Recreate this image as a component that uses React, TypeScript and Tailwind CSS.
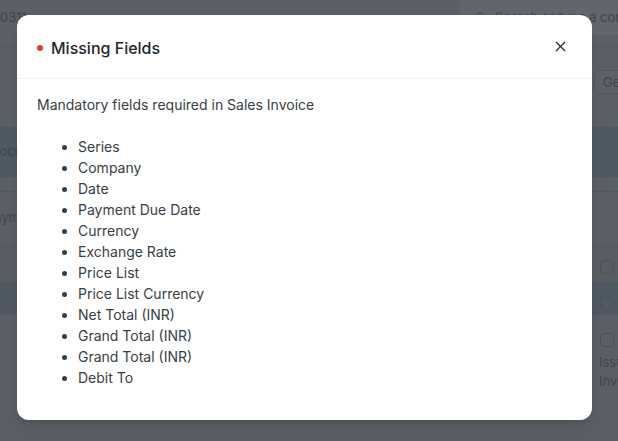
import { X, Search } from 'lucide-react';

const fields = [
  'Series',
  'Company',
  'Date',
  'Payment Due Date',
  'Currency',
  'Exchange Rate',
  'Price List',
  'Price List Currency',
  'Net Total (INR)',
  'Grand Total (INR)',
  'Grand Total (INR)',
  'Debit To',
];

function Backdrop() {
  return (
    <div className="flex h-[441px] flex-col bg-[#5a5f65] text-[13px] text-[#3f454c]">
      <div className="flex h-[47px] items-start justify-between border-b border-[#555a60] bg-[#5b6066]">
        <span className="-ml-[8px] pt-[8px]">20311</span>
        <div className="flex h-[35px] w-[158px] items-center gap-[8px] rounded-bl-md bg-[#61666c] pl-[14px]">
          <Search size={13} strokeWidth={1.6} className="shrink-0" />
          <span className="whitespace-nowrap">Search or type a com</span>
        </div>
      </div>
      <div className="flex h-[80px] flex-col items-end pt-[23px]">
        <div className="-mr-6 h-[24px] w-[48px] rounded-md border border-[#52575d] bg-[#5d6268] pl-2 leading-[22px]">Get</div>
      </div>
      <div className="flex h-[50px] items-center bg-[#4f5963] text-[#3a4550]">
        <span className="-ml-[10px]">Docu</span>
      </div>
      <div className="h-[15px] border-b border-[#53585e]" />
      <div className="flex h-[53px] items-center border-b border-[#53585e]">
        <span className="-ml-[14px]">Payment</span>
      </div>
      <div className="relative h-[38px] border-b border-[#53585e] bg-[#585d63]">
        <div className="absolute right-[4px] top-[15px] h-[14px] w-[14px] rounded-[4px] border border-[#4c5157]" />
      </div>
      <div className="relative h-[32px] bg-[#4f5963]">
        <div className="absolute right-[4px] top-[13px] h-[14px] w-[14px] rounded-[4px] border border-[#4c5157]" />
      </div>
      <div className="flex flex-1 flex-col items-end pt-[18px]">
        <div className="h-[14px] w-[14px] translate-x-[-4px] rounded-[4px] border border-[#4c5157]" />
        <div className="mt-[6px] w-[19px] overflow-hidden leading-[19px]">Issue</div>
        <div className="w-[19px] overflow-hidden leading-[19px]">Invoice</div>
      </div>
    </div>
  );
}

export default function App() {
  return (
    <div className="relative h-[441px] w-[618px] overflow-hidden font-['Inter',sans-serif]">
      <Backdrop />
      <div className="absolute left-[17px] top-[15px] flex h-[405px] w-[575px] flex-col rounded-xl bg-white shadow-lg">
        <div className="flex h-[64px] items-center justify-between border-b border-[#f0f1f2] pl-[20px] pr-[23px]">
          <div className="flex items-center gap-[8px] pt-[2px]">
            <span className="h-[6px] w-[6px] rounded-full bg-[#d93a3a]" />
            <h2 className="text-[16px] font-medium text-[#1f272e]">Missing Fields</h2>
          </div>
          <X size={17} strokeWidth={1.7} className="text-[#1f272e]" />
        </div>
        <div className="px-[20px] pt-[15px] text-[14px] leading-[21px] text-[#383e45]">
          <p>Mandatory fields required in Sales Invoice</p>
          <ul className="mt-[21px] list-disc pl-[41px]">
            {fields.map((f, i) => (
              <li key={i}>{f}</li>
            ))}
          </ul>
        </div>
      </div>
    </div>
  );
}
